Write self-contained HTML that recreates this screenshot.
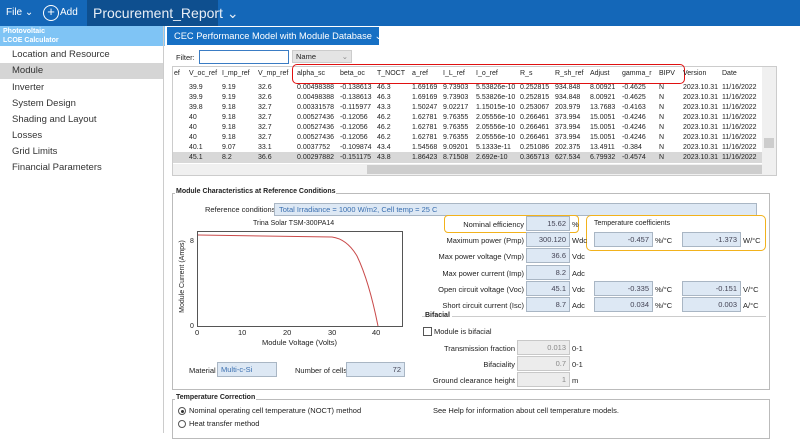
<!DOCTYPE html>
<html><head><meta charset="utf-8"><style>
*{box-sizing:border-box;margin:0;padding:0}
body{width:800px;height:433px;overflow:hidden;background:#fff;font-family:"Liberation Sans",sans-serif;font-size:8px;color:#222;position:relative}
.a{position:absolute;white-space:nowrap}
.f{position:absolute;background:#dde8f4;border:1px solid #a9b6c4;height:15px;text-align:right;padding-right:3px;line-height:13px;font-size:7.5px;color:#445}
.g{position:absolute;background:#ececec;border:1px solid #c8c8c8;height:15px;text-align:right;padding-right:3px;line-height:13px;font-size:7.5px;color:#888}
.r{text-align:right}
.side div{position:absolute;left:12px;font-size:9.5px;color:#333}
.tbl div{position:absolute;font-size:7px;color:#222}
</style></head><body>
<div class="a" style="left:0;top:0;width:800px;height:26px;background:#1467b8"></div>
<div class="a" style="left:87px;top:0;width:131px;height:26px;background:#0e4f8f"></div>
<div class="a" style="left:6px;top:7px;color:#fff;font-size:10px">File ⌄</div>
<div class="a" style="left:43px;top:5px;width:16px;height:16px;border:1.5px solid #fff;border-radius:50%;color:#fff;font-size:13px;line-height:12px;text-align:center">+</div>
<div class="a" style="left:60px;top:7px;color:#fff;font-size:10px">Add</div>
<div class="a" style="left:93px;top:5px;color:#e8eef6;font-size:14px">Procurement_Report ⌄</div>
<div class="a" style="left:0;top:26px;width:165px;height:20px;background:#7fc4f5"></div>
<div class="a" style="left:3px;top:27px;color:#fff;font-size:7px;font-weight:bold;line-height:9px">Photovoltaic<br>LCOE Calculator</div>
<div class="a" style="left:0;top:63px;width:163px;height:16px;background:#d5d5d5"></div>
<div class="a" style="left:163px;top:26px;width:1px;height:407px;background:#ccc"></div>
<div class="side">
<div style="top:49px">Location and Resource</div><div style="top:65px">Module</div><div style="top:82px">Inverter</div><div style="top:98px">System Design</div><div style="top:114px">Shading and Layout</div><div style="top:130px">Losses</div><div style="top:146px">Grid Limits</div><div style="top:162px">Financial Parameters</div></div>
<div class="a" style="left:167px;top:27px;width:212px;height:18px;background:#1770c4;color:#fff;font-size:9.3px;line-height:18px;padding-left:7px">CEC Performance Model with Module Database ⌄</div>
<div class="a" style="left:176px;top:53px;font-size:7.5px">Filter:</div>
<div class="a" style="left:199px;top:50px;width:90px;height:14px;border:1px solid #3a7cc4"></div>
<div class="a" style="left:292px;top:50px;width:60px;height:13px;background:#e4e4e4;border:1px solid #ccc;font-size:7.5px;padding-left:3px;line-height:11px">Name <span style="float:right;padding-right:3px;color:#888">⌄</span></div>
<div class="a" style="left:172px;top:66px;width:605px;height:110px;border:1px solid #ccc"></div>
<div class="a" style="left:173px;top:152px;width:589px;height:11px;background:#d8d8d8"></div>
<div class="a" style="left:173px;top:164px;width:603px;height:11px;background:#f0f0f0"></div>
<div class="a" style="left:367px;top:165px;width:395px;height:9px;background:#cdcdcd"></div>
<div class="a" style="left:762px;top:67px;width:14px;height:97px;background:#f0f0f0"></div>
<div class="a" style="left:764px;top:138px;width:10px;height:10px;background:#cdcdcd"></div>
<div class="a" style="left:292px;top:64px;width:393px;height:20px;border:1.5px solid #e01010;border-radius:5px"></div>
<div class="tbl" id="t"></div>
<script>
var xs=[174,189,222,258,297,340,377,412,443,476,520,555,590,622,659,683,722];
var h=["ef","V_oc_ref","I_mp_ref","V_mp_ref","alpha_sc","beta_oc","T_NOCT","a_ref","I_L_ref","I_o_ref","R_s","R_sh_ref","Adjust","gamma_r","BIPV","Version","Date"];
var rows=[["","39.9","9.19","32.6","0.00498388","-0.138613","46.3","1.69169","9.73903","5.53826e-10","0.252815","934.848","8.00921","-0.4625","N","2023.10.31","11/16/2022"],
["","39.9","9.19","32.6","0.00498388","-0.138613","46.3","1.69169","9.73903","5.53826e-10","0.252815","934.848","8.00921","-0.4625","N","2023.10.31","11/16/2022"],
["","39.8","9.18","32.7","0.00331578","-0.115977","43.3","1.50247","9.02217","1.15015e-10","0.253067","203.979","13.7683","-0.4163","N","2023.10.31","11/16/2022"],
["","40","9.18","32.7","0.00527436","-0.12056","46.2","1.62781","9.76355","2.05556e-10","0.266461","373.994","15.0051","-0.4246","N","2023.10.31","11/16/2022"],
["","40","9.18","32.7","0.00527436","-0.12056","46.2","1.62781","9.76355","2.05556e-10","0.266461","373.994","15.0051","-0.4246","N","2023.10.31","11/16/2022"],
["","40","9.18","32.7","0.00527436","-0.12056","46.2","1.62781","9.76355","2.05556e-10","0.266461","373.994","15.0051","-0.4246","N","2023.10.31","11/16/2022"],
["","40.1","9.07","33.1","0.0037752","-0.109874","43.4","1.54568","9.09201","5.1333e-11","0.251086","202.375","13.4911","-0.384","N","2023.10.31","11/16/2022"],
["","45.1","8.2","36.6","0.00297882","-0.151175","43.8","1.86423","8.71508","2.692e-10","0.365713","627.534","6.79932","-0.4574","N","2023.10.31","11/16/2022"]];
var s="";h.forEach(function(t,i){s+='<div style="left:'+xs[i]+'px;top:70px">'+t+'</div>'});
rows.forEach(function(r,j){r.forEach(function(t,i){s+='<div style="left:'+xs[i]+'px;top:'+(84+j*10)+'px">'+t+'</div>'})});
document.getElementById('t').innerHTML=s;
</script>
<!-- module group -->
<div class="a" style="left:172px;top:193px;width:598px;height:197px;border:1px solid #bbb"></div>
<div class="a" style="left:175px;top:188px;background:#fff;font-size:7px;font-weight:bold;padding:0 1px">Module Characteristics at Reference Conditions</div>
<div class="a" style="left:205px;top:205px;font-size:7.5px">Reference conditions:</div>
<div class="f" style="left:274px;top:203px;width:483px;height:13px;line-height:11px;text-align:left;padding-left:4px;color:#3a6fb0">Total Irradiance = 1000 W/m2, Cell temp = 25 C</div>
<div class="a" style="left:253px;top:220px;font-size:7px">Trina Solar TSM-300PA14</div>
<div class="a" style="left:197px;top:231px;width:206px;height:96px;border:1px solid #555"></div>
<svg class="a" style="left:197px;top:231px" width="206" height="96"><path d="M1 4 L135 6 Q150 8 160 25 Q172 50 181 95" fill="none" stroke="#c94a4a" stroke-width="1"/></svg>
<div class="a" style="left:190px;top:238px;font-size:7px">8</div>
<div class="a" style="left:190px;top:323px;font-size:7px">0</div>
<div class="a" style="left:195px;top:328px;font-size:7.5px">0</div><div class="a" style="left:238px;top:328px;font-size:7.5px">10</div><div class="a" style="left:283px;top:328px;font-size:7.5px">20</div><div class="a" style="left:328px;top:328px;font-size:7.5px">30</div><div class="a" style="left:372px;top:328px;font-size:7.5px">40</div>
<div class="a" style="left:262px;top:338px;font-size:7.5px">Module Voltage (Volts)</div>
<div class="a" style="left:146px;top:273px;font-size:7px;transform:rotate(-90deg)">Module Current (Amps)</div>
<div class="a" style="left:189px;top:366px;font-size:7.5px">Material</div>
<div class="f" style="left:217px;top:362px;width:60px;text-align:left;padding-left:3px;color:#3a6fb0">Multi-c-Si</div>
<div class="a" style="left:295px;top:366px;font-size:7.5px">Number of cells</div>
<div class="f" style="left:346px;top:362px;width:59px">72</div>
<div class="a" style="left:444px;top:215px;width:135px;height:18px;border:1.5px solid #f2b21c;border-radius:4px"></div>
<div class="a" style="left:586px;top:215px;width:180px;height:36px;border:1.5px solid #f2b21c;border-radius:5px"></div>
<div class="a" style="left:594px;top:220px;font-size:7px">Temperature coefficients</div>
<div class="a r" style="left:396px;width:128px;top:220px;font-size:7.5px">Nominal efficiency</div><div class="f" style="left:526px;top:216px;width:44px">15.62</div><div class="a" style="left:572px;top:220px;font-size:7.5px">%</div>
<div class="a r" style="left:396px;width:128px;top:236px;font-size:7.5px">Maximum power (Pmp)</div><div class="f" style="left:526px;top:232px;width:44px">300.120</div><div class="a" style="left:572px;top:236px;font-size:7.5px">Wdc</div>
<div class="a r" style="left:396px;width:128px;top:252px;font-size:7.5px">Max power voltage (Vmp)</div><div class="f" style="left:526px;top:248px;width:44px">36.6</div><div class="a" style="left:572px;top:252px;font-size:7.5px">Vdc</div>
<div class="a r" style="left:396px;width:128px;top:269px;font-size:7.5px">Max power current (Imp)</div><div class="f" style="left:526px;top:265px;width:44px">8.2</div><div class="a" style="left:572px;top:269px;font-size:7.5px">Adc</div>
<div class="a r" style="left:396px;width:128px;top:285px;font-size:7.5px">Open circuit voltage (Voc)</div><div class="f" style="left:526px;top:281px;width:44px">45.1</div><div class="a" style="left:572px;top:285px;font-size:7.5px">Vdc</div>
<div class="a r" style="left:396px;width:128px;top:301px;font-size:7.5px">Short circuit current (Isc)</div><div class="f" style="left:526px;top:297px;width:44px">8.7</div><div class="a" style="left:572px;top:301px;font-size:7.5px">Adc</div>
<div class="f" style="left:594px;top:232px;width:59px">-0.457</div><div class="a" style="left:655px;top:236px;font-size:7.5px">%/°C</div><div class="f" style="left:682px;top:232px;width:59px">-1.373</div><div class="a" style="left:743px;top:236px;font-size:7.5px">W/°C</div>
<div class="f" style="left:594px;top:281px;width:59px">-0.335</div><div class="a" style="left:655px;top:285px;font-size:7.5px">%/°C</div><div class="f" style="left:682px;top:281px;width:59px">-0.151</div><div class="a" style="left:743px;top:285px;font-size:7.5px">V/°C</div>
<div class="f" style="left:594px;top:297px;width:59px">0.034</div><div class="a" style="left:655px;top:301px;font-size:7.5px">%/°C</div><div class="f" style="left:682px;top:297px;width:59px">0.003</div><div class="a" style="left:743px;top:301px;font-size:7.5px">A/°C</div>
<div class="a" style="left:422px;top:316px;width:344px;height:1px;background:#ccc"></div>
<div class="a" style="left:425px;top:312px;background:#fff;font-size:7px;font-weight:bold;padding-right:2px">Bifacial</div>
<div class="a" style="left:423px;top:327px;width:9px;height:9px;border:1px solid #555"></div>
<div class="a" style="left:434px;top:327px;font-size:7.5px">Module is bifacial</div>
<div class="a r" style="left:395px;width:120px;top:344px;font-size:7.5px">Transmission fraction</div><div class="g" style="left:517px;top:340px;width:53px">0.013</div><div class="a" style="left:572px;top:344px;font-size:7.5px">0-1</div>
<div class="a r" style="left:395px;width:120px;top:360px;font-size:7.5px">Bifaciality</div><div class="g" style="left:517px;top:356px;width:53px">0.7</div><div class="a" style="left:572px;top:360px;font-size:7.5px">0-1</div>
<div class="a r" style="left:395px;width:120px;top:376px;font-size:7.5px">Ground clearance height</div><div class="g" style="left:517px;top:372px;width:53px">1</div><div class="a" style="left:572px;top:376px;font-size:7.5px">m</div>
<!-- temperature correction -->
<div class="a" style="left:172px;top:399px;width:598px;height:40px;border:1px solid #bbb"></div>
<div class="a" style="left:175px;top:394px;background:#fff;font-size:7px;font-weight:bold;padding:0 1px">Temperature Correction</div>
<div class="a" style="left:178px;top:407px;width:8px;height:8px;border:1px solid #555;border-radius:50%"><div style="margin:1.5px;width:3px;height:3px;background:#333;border-radius:50%"></div></div>
<div class="a" style="left:189px;top:406px;font-size:7.5px">Nominal operating cell temperature (NOCT) method</div>
<div class="a" style="left:178px;top:420px;width:8px;height:8px;border:1px solid #555;border-radius:50%"></div>
<div class="a" style="left:189px;top:419px;font-size:7.5px">Heat transfer method</div>
<div class="a" style="left:433px;top:406px;font-size:7.5px">See Help for information about cell temperature models.</div>
</body></html>
